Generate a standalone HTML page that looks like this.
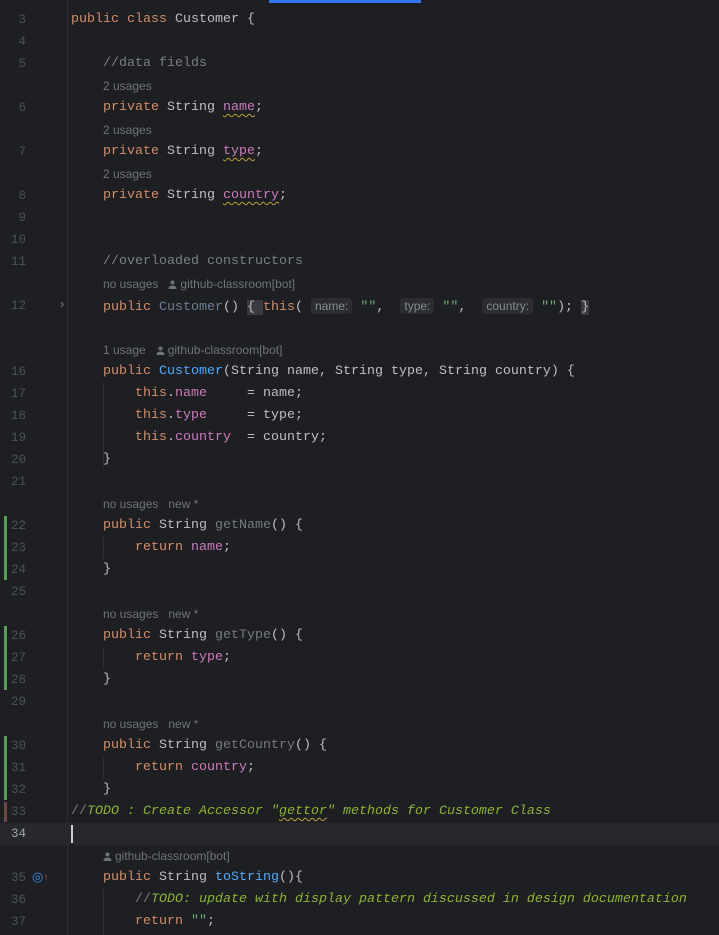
<!DOCTYPE html>
<html><head><meta charset="utf-8"><style>
html,body{margin:0;padding:0;background:#1e1f22;width:719px;height:935px;overflow:hidden;}
body{position:relative;font-family:"Liberation Mono",monospace;font-size:13.33px;color:#bcbec4;}
#w{position:absolute;left:0;top:2px;width:719px;height:935px;}
.r{position:absolute;left:0;height:22px;line-height:22px;width:719px;white-space:pre;}
.n{position:absolute;right:693px;width:40px;text-align:right;color:#4b5059;font-size:12.5px;}
.c{position:absolute;left:71px;}
.h{position:absolute;font-family:"Liberation Sans",sans-serif;font-size:12px;color:#6f737a;white-space:pre;}
.h svg{vertical-align:-1px;margin-right:3px}
.k{color:#cf8e6d}.f{color:#c77dbb}.m{color:#56a8f5}.g{color:#7a7e85}.u{color:#75797f}.uc{color:#6d7f94}
.t{color:#8bb33d;font-style:italic}.s{color:#6aab73}
.w{text-decoration:underline wavy #b8a03a;text-underline-offset:3px;text-decoration-thickness:1px}
.ih{font-family:"Liberation Sans",sans-serif;font-size:12px;color:#868a91;background:#2b2d30;border-radius:3px;padding:1px 4px;}
.fb{background:#393b40;}
.bar{position:absolute;left:4px;width:3px;background:#5a9e5a;}
.guide{position:absolute;width:1px;background:#2c2e33;}
</style></head><body>
<div style="position:absolute;left:269px;top:0;width:152px;height:3px;background:#3574f0"></div>
<div style="position:absolute;left:67px;top:0;width:1px;height:935px;background:#2b2d30"></div>
<div id="w">
<div class="guide" style="left:103px;top:380px;height:88px"></div>
<div class="guide" style="left:103px;top:535px;height:22px"></div>
<div class="guide" style="left:103px;top:645px;height:22px"></div>
<div class="guide" style="left:103px;top:755px;height:22px"></div>
<div class="guide" style="left:103px;top:887px;height:48px"></div>
<div class="bar" style="top:514px;height:64px"></div>
<div class="bar" style="top:624px;height:64px"></div>
<div class="bar" style="top:734px;height:64px"></div>
<div class="bar" style="top:800px;height:20px;background:#6b4a44"></div>
<div style="position:absolute;left:0;top:821px;width:719px;height:22px;background:#26282e"></div>
<div style="position:absolute;left:71px;top:823px;width:2px;height:18px;background:#ced0d6"></div>

<div class="r" style="top:7px"><span class="n">3</span><span class="c"><span class="k">public class </span>Customer {</span></div>
<div class="r" style="top:29px"><span class="n">4</span></div>
<div class="r" style="top:51px"><span class="n">5</span><span class="c">    <span class="g">//data fields</span></span></div>
<div class="h" style="left:103px;top:77px">2 usages</div>
<div class="r" style="top:95px"><span class="n">6</span><span class="c">    <span class="k">private </span>String <span class="f w">name</span>;</span></div>
<div class="h" style="left:103px;top:121px">2 usages</div>
<div class="r" style="top:139px"><span class="n">7</span><span class="c">    <span class="k">private </span>String <span class="f w">type</span>;</span></div>
<div class="h" style="left:103px;top:165px">2 usages</div>
<div class="r" style="top:183px"><span class="n">8</span><span class="c">    <span class="k">private </span>String <span class="f w">country</span>;</span></div>
<div class="r" style="top:205px"><span class="n">9</span></div>
<div class="r" style="top:227px"><span class="n">10</span></div>
<div class="r" style="top:249px"><span class="n">11</span><span class="c">    <span class="g">//overloaded constructors</span></span></div>
<div class="h" style="left:103px;top:275px">no usages   <svg width="9" height="9" viewBox="0 0 9 9"><circle cx="4.5" cy="2.5" r="2" fill="#6f737a"/><path d="M0.5 9 Q0.5 5.5 4.5 5.5 Q8.5 5.5 8.5 9Z" fill="#6f737a"/></svg>github-classroom[bot]</div>
<div class="r" style="top:293px"><span class="n">12</span><span style="position:absolute;left:58px;color:#6f737a">›</span><span class="c">    <span class="k">public </span><span class="uc">Customer</span>() <span class="fb">{ </span><span class="k">this</span>( <span class="ih">name:</span> <span class="s">""</span>,  <span class="ih">type:</span> <span class="s">""</span>,  <span class="ih">country:</span> <span class="s">""</span>); <span class="fb">}</span></span></div>
<div class="h" style="left:103px;top:341px">1 usage   <svg width="9" height="9" viewBox="0 0 9 9"><circle cx="4.5" cy="2.5" r="2" fill="#6f737a"/><path d="M0.5 9 Q0.5 5.5 4.5 5.5 Q8.5 5.5 8.5 9Z" fill="#6f737a"/></svg>github-classroom[bot]</div>
<div class="r" style="top:359px"><span class="n">16</span><span class="c">    <span class="k">public </span><span class="m">Customer</span>(String name, String type, String country) {</span></div>
<div class="r" style="top:381px"><span class="n">17</span><span class="c">        <span class="k">this</span>.<span class="f">name</span>     = name;</span></div>
<div class="r" style="top:403px"><span class="n">18</span><span class="c">        <span class="k">this</span>.<span class="f">type</span>     = type;</span></div>
<div class="r" style="top:425px"><span class="n">19</span><span class="c">        <span class="k">this</span>.<span class="f">country</span>  = country;</span></div>
<div class="r" style="top:447px"><span class="n">20</span><span class="c">    }</span></div>
<div class="r" style="top:469px"><span class="n">21</span></div>
<div class="h" style="left:103px;top:495px">no usages   new *</div>
<div class="r" style="top:513px"><span class="n">22</span><span class="c">    <span class="k">public </span>String <span class="u">getName</span>() {</span></div>
<div class="r" style="top:535px"><span class="n">23</span><span class="c">        <span class="k">return </span><span class="f">name</span>;</span></div>
<div class="r" style="top:557px"><span class="n">24</span><span class="c">    }</span></div>
<div class="r" style="top:579px"><span class="n">25</span></div>
<div class="h" style="left:103px;top:605px">no usages   new *</div>
<div class="r" style="top:623px"><span class="n">26</span><span class="c">    <span class="k">public </span>String <span class="u">getType</span>() {</span></div>
<div class="r" style="top:645px"><span class="n">27</span><span class="c">        <span class="k">return </span><span class="f">type</span>;</span></div>
<div class="r" style="top:667px"><span class="n">28</span><span class="c">    }</span></div>
<div class="r" style="top:689px"><span class="n">29</span></div>
<div class="h" style="left:103px;top:715px">no usages   new *</div>
<div class="r" style="top:733px"><span class="n">30</span><span class="c">    <span class="k">public </span>String <span class="u">getCountry</span>() {</span></div>
<div class="r" style="top:755px"><span class="n">31</span><span class="c">        <span class="k">return </span><span class="f">country</span>;</span></div>
<div class="r" style="top:777px"><span class="n">32</span><span class="c">    }</span></div>
<div class="r" style="top:799px"><span class="n">33</span><span class="c"><span class="g">//</span><span class="t">TODO : Create Accessor "<span class="w">gettor</span>" methods for Customer Class</span></span></div>
<div class="r" style="top:821px"><span class="n" style="color:#a1a3ab">34</span></div>
<div class="h" style="left:103px;top:847px"><svg width="9" height="9" viewBox="0 0 9 9"><circle cx="4.5" cy="2.5" r="2" fill="#6f737a"/><path d="M0.5 9 Q0.5 5.5 4.5 5.5 Q8.5 5.5 8.5 9Z" fill="#6f737a"/></svg>github-classroom[bot]</div>
<div class="r" style="top:865px"><span class="n">35</span><span style="position:absolute;left:32px;color:#3d8ef5;font-size:13px">◎<span style="color:#e05555;font-size:9px;vertical-align:top">↑</span></span><span class="c">    <span class="k">public </span>String <span class="m">toString</span>(){</span></div>
<div class="r" style="top:887px"><span class="n">36</span><span class="c">        <span class="g">//</span><span class="t">TODO: update with display pattern discussed in design documentation</span></span></div>
<div class="r" style="top:909px"><span class="n">37</span><span class="c">        <span class="k">return </span><span class="s">""</span>;</span></div>
</div>
</body></html>
